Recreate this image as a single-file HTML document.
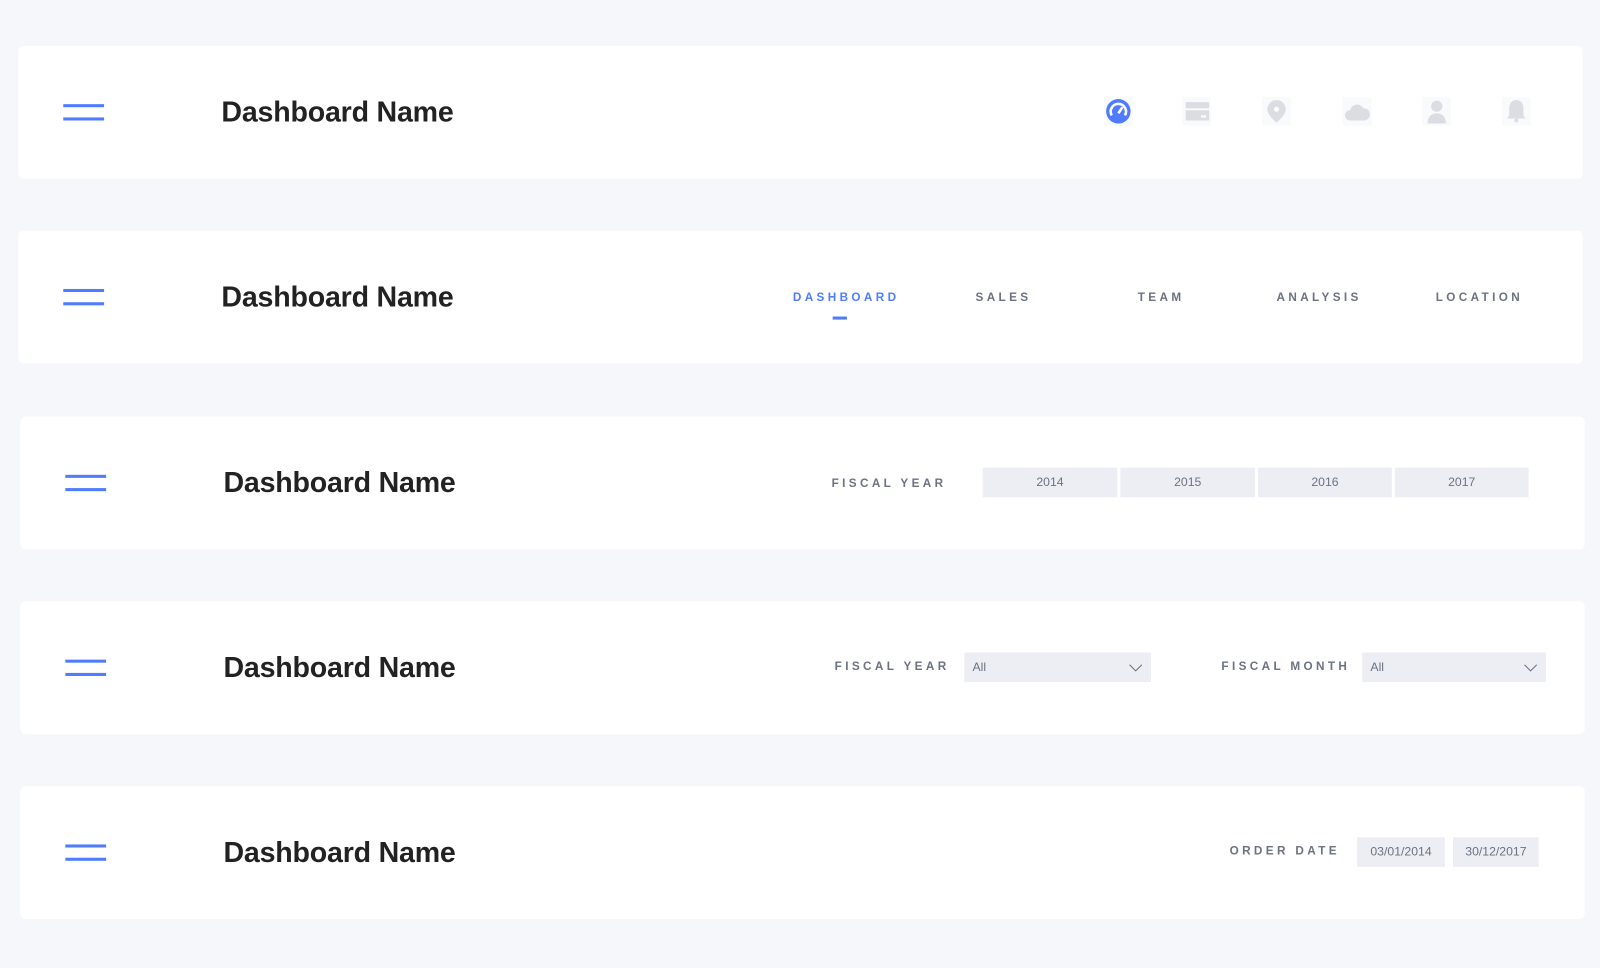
<!DOCTYPE html>
<html><head><meta charset="utf-8"><style>
*{margin:0;padding:0;box-sizing:border-box}
body{width:1600px;height:968px;background:#f6f7fb;font-family:"Liberation Sans",sans-serif;position:relative;overflow:hidden}
#w{position:absolute;left:0;top:0;width:1568px;height:948px;transform:scale(1.0204,1.0211);transform-origin:0 0}
.card{position:absolute;left:18px;width:1533px;height:130px;background:#fff;border-radius:5px}
.ham{position:absolute;left:44px;top:57px;width:40px;height:16px;border-top:3px solid #4f7cff;border-bottom:3px solid #4f7cff}
.title{position:absolute;left:199px;top:49px;font-size:28px;font-weight:bold;color:#222;letter-spacing:-0.2px}
.lbl{position:absolute;font-size:11.5px;letter-spacing:3.3px;color:#6b7280;font-weight:bold}
.box{position:absolute;background:#eceef4;font-size:12px;color:#6b7280;height:29px;line-height:29px}
.ic{position:absolute;top:50px;width:28px;height:28px;background:#f9fafc}
</style></head><body><div id="w">
<div class="card" style="top:45px">
 <div class="ham"></div><div class="title">Dashboard Name</div>
 <div class="ic" style="left:1064px"><svg width="28" height="28" viewBox="0 0 28 28"><circle cx="14" cy="14" r="12" fill="#4f7cff"/><path d="M7.5 18 A7.5 7.5 0 1 1 20.5 18" stroke="#fff" stroke-width="2.5" fill="none"/><path d="M14 16 L18 10" stroke="#fff" stroke-width="2.5"/></svg></div>
 <div class="ic" style="left:1141px"><svg width="28" height="28" viewBox="0 0 28 28"><rect x="3" y="5" width="23" height="6" fill="#dcdde2"/><rect x="3" y="13" width="23" height="10" fill="#dcdde2"/><rect x="18" y="18" width="5" height="2" fill="#fff"/></svg></div>
 <div class="ic" style="left:1219px"><svg width="28" height="28" viewBox="0 0 28 28"><path d="M14 3a9 9 0 0 1 9 9c0 6-9 13-9 13S5 18 5 12a9 9 0 0 1 9-9z" fill="#dcdde2"/><circle cx="14" cy="12" r="2.5" fill="#fff"/></svg></div>
 <div class="ic" style="left:1298px"><svg width="28" height="28" viewBox="0 0 28 28"><path d="M7 23a5 5 0 0 1 0-10 7 7 0 0 1 13-2 6 6 0 0 1 1 12z" fill="#dcdde2"/></svg></div>
 <div class="ic" style="left:1376px"><svg width="28" height="28" viewBox="0 0 28 28"><circle cx="14" cy="9" r="5.5" fill="#dcdde2"/><path d="M5 26c0-7 4-10 9-10s9 3 9 10z" fill="#dcdde2"/></svg></div>
 <div class="ic" style="left:1454px"><svg width="28" height="28" viewBox="0 0 28 28"><path d="M14 3c-5 0-7 4-7 8v7l-2 3h18l-2-3v-7c0-4-2-8-7-8z" fill="#dcdde2"/><circle cx="14" cy="23" r="2" fill="#dcdde2"/></svg></div>
</div>
<div class="card" style="top:226px">
 <div class="ham"></div><div class="title">Dashboard Name</div>
 <div class="lbl" style="left:759px;top:60px;color:#4f7cff">DASHBOARD</div>
 <div style="position:absolute;left:798px;top:84px;width:14px;height:3px;background:#4f7cff"></div>
 <div class="lbl" style="left:938px;top:60px">SALES</div>
 <div class="lbl" style="left:1097px;top:60px">TEAM</div>
 <div class="lbl" style="left:1233px;top:60px">ANALYSIS</div>
 <div class="lbl" style="left:1389px;top:60px">LOCATION</div>
</div>
<div class="card" style="top:408px;left:20px">
 <div class="ham"></div><div class="title">Dashboard Name</div>
 <div class="lbl" style="left:795px;top:60px">FISCAL YEAR</div>
 <div class="box" style="left:943px;top:50px;width:132px;text-align:center">2014</div>
 <div class="box" style="left:1078px;top:50px;width:132px;text-align:center">2015</div>
 <div class="box" style="left:1213px;top:50px;width:131px;text-align:center">2016</div>
 <div class="box" style="left:1347px;top:50px;width:131px;text-align:center">2017</div>
</div>
<div class="card" style="top:589px;left:20px">
 <div class="ham"></div><div class="title">Dashboard Name</div>
 <div class="lbl" style="left:798px;top:58px">FISCAL YEAR</div>
 <div class="box" style="left:925px;top:50px;width:183px;padding-left:8px">All<svg style="position:absolute;right:8px;top:11px" width="14" height="8" viewBox="0 0 14 8"><path d="M1 1l6 6 6-6" stroke="#6b7280" fill="none"/></svg></div>
 <div class="lbl" style="left:1177px;top:58px">FISCAL MONTH</div>
 <div class="box" style="left:1315px;top:50px;width:180px;padding-left:8px">All<svg style="position:absolute;right:8px;top:11px" width="14" height="8" viewBox="0 0 14 8"><path d="M1 1l6 6 6-6" stroke="#6b7280" fill="none"/></svg></div>
</div>
<div class="card" style="top:770px;left:20px">
 <div class="ham"></div><div class="title">Dashboard Name</div>
 <div class="lbl" style="left:1185px;top:58px">ORDER DATE</div>
 <div class="box" style="left:1310px;top:50px;width:86px;text-align:center">03/01/2014</div>
 <div class="box" style="left:1404px;top:50px;width:84px;text-align:center">30/12/2017</div>
</div>
</div></body></html>
